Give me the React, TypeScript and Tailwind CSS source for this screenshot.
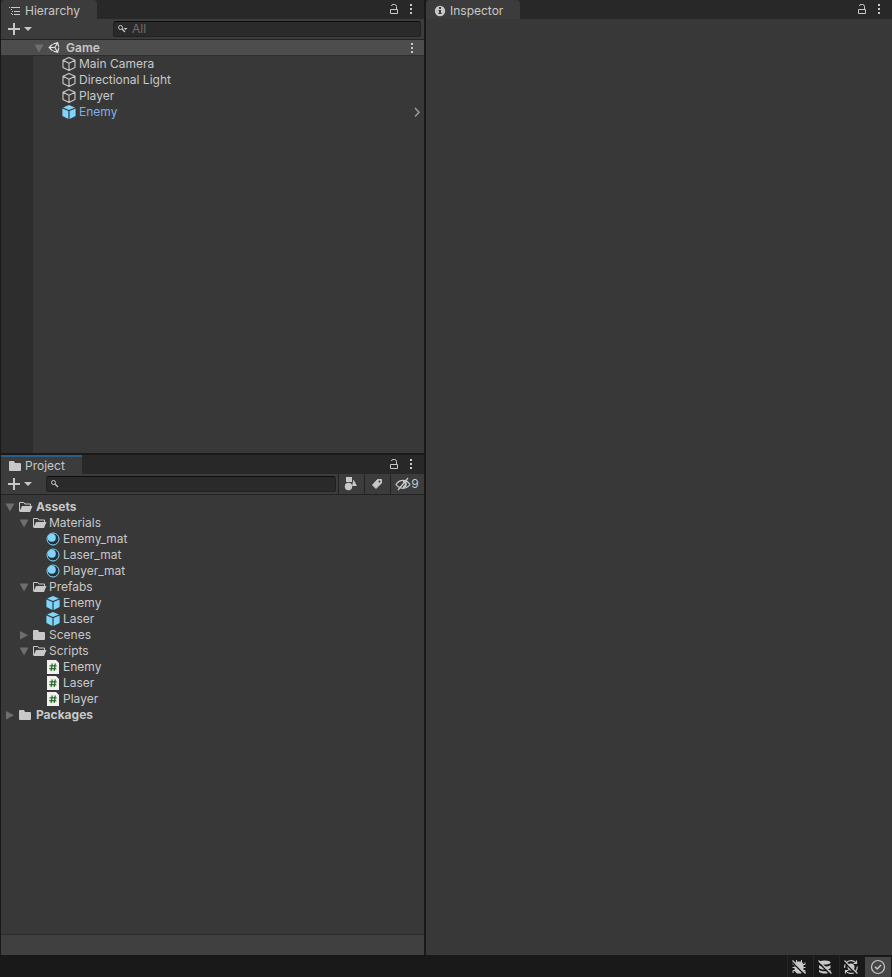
import { useState } from 'react';
import type { ReactNode } from 'react';
import { FaUnity } from 'react-icons/fa';

type IconProps = { className?: string };

function HierarchyIcon() {
  return (
    <svg className="h-4 w-3 shrink-0" viewBox="0 0 12 16" fill="currentColor">
      <path d="M0 4h1v1H0zM2 4h9v1H2zM2 6h1v1H2zM3 8h1v1H3zM5 8h6v1H5zM2 10h1v1H2zM3 11h1v1H3zM5 11h6v1H5z" />
    </svg>
  );
}

function InfoIcon() {
  return (
    <svg className="h-4 w-3 shrink-0" viewBox="0 0 12 16">
      <circle cx="6" cy="8" r="5.200" fill="currentColor" />
      <path d="M5 4h2v2H5zM4.500 7H7v3h.7v1H4.400v-1H5V8h-.5z" fill="#3c3c3c" />
    </svg>
  );
}

function LockIcon() {
  return (
    <svg className="h-3 w-2.5" viewBox="0 0 10 12" fill="none" stroke="currentColor">
      <path d="M1.500 6.500h7v4h-7zM2.500 3q0-1.500 1.500-1.500h1.500q2 0 2 2V6" />
    </svg>
  );
}

function KebabIcon() {
  return (
    <svg className="h-3 w-1" viewBox="0 0 4 12" fill="currentColor">
      <path d="M1 1h2v2H1zM1 5h2v2H1zM1 9h2v2H1z" />
    </svg>
  );
}

function PlusIcon() {
  return (
    <svg className="h-3 w-6" viewBox="0 0 24 12" fill="currentColor">
      <path d="M5 0h2v5h5v2H7v5H5V7H0V5h5zM16 4h8l-4 4z" />
    </svg>
  );
}

function SearchIcon({ menu = false }: { menu?: boolean }) {
  return (
    <svg className="h-3 w-3 shrink-0" viewBox="0 0 12 12" fill="none" stroke="currentColor">
      <circle cx="3.500" cy="4.500" r="2" />
      <path d="M5 6 8 9" strokeWidth="1.300" />
      {menu && <path d="M6.500 5h4l-2 2z" fill="currentColor" stroke="none" />}
    </svg>
  );
}

function Foldout({ open }: { open: boolean }) {
  return (
    <svg className="size-3 shrink-0 text-[#6e6e6e]" viewBox="0 0 12 12" fill="currentColor">
      {open ? <path d="M1.500 2.500h9L6 10.500z" /> : <path d="M2 2v8.500l8-4.200z" />}
    </svg>
  );
}

function ObjectIcon() {
  return (
    <svg className="size-4 shrink-0" viewBox="0 0 16 16" fill="none" stroke="currentColor" strokeWidth="1.100" strokeLinejoin="round">
      <path d="M8 1.500 14 4.300v7.200L8 14.500 2 11.500V4.300zM2 4.300l6 3 6-3M8 7.300v7.200" />
    </svg>
  );
}

function PrefabIcon() {
  return (
    <svg className="size-4 shrink-0" viewBox="0 0 16 16" fill="#7fd6fd">
      <path d="M8 1l6 2.400-6 2.500-6-2.500zM1.400 4.400l6 2.500V15l-6-3zM14.600 4.400l-6 2.500V15l6-3z" />
    </svg>
  );
}

function MaterialIcon() {
  return (
    <svg className="size-4 shrink-0" viewBox="0 0 16 16">
      <circle cx="8" cy="8" r="6" fill="#263238" stroke="#7fd6fd" />
      <circle cx="6.800" cy="6.800" r="4" fill="#7fd6fd" />
    </svg>
  );
}

function ScriptIcon() {
  return (
    <svg className="size-4 shrink-0" viewBox="0 0 16 16">
      <path d="M2 1h9l3 3v11H2z" fill="#f0f0f0" />
      <path d="M7.200 4.500 6.200 12M10.200 4.500 9.200 12M4.600 6.800h7M4.300 9.700h7" fill="none" stroke="#2c6a2c" strokeWidth="1.300" />
    </svg>
  );
}

function FolderIcon({ className = 'size-4' }: IconProps) {
  return (
    <svg className={`shrink-0 ${className}`} viewBox="0 0 16 16" fill="currentColor">
      <path d="M2 4q0-1 1-1h4l1 2h5q1 0 1 1v6q0 1-1 1H3q-1 0-1-1z" />
    </svg>
  );
}

function OpenFolderIcon() {
  return (
    <svg className="size-4 shrink-0" viewBox="0 0 16 16">
      <path d="M2.500 12V3.500h4.300l1 1.500h5.700v2" fill="none" stroke="currentColor" />
      <path d="M5 7h10.500L13 13H2.300z" fill="currentColor" />
    </svg>
  );
}

function FilterTypeIcon() {
  return (
    <svg className="size-4" viewBox="0 0 16 16" fill="currentColor">
      <path d="M3 1h6v5H3zM10.500 3.500 14 10H9z" />
      <circle cx="5.500" cy="10.500" r="3.700" />
    </svg>
  );
}

function LabelIcon() {
  return (
    <svg className="size-4" viewBox="0 0 16 16">
      <path d="M8.500 3.500h4v3.500L7 12.500 3.500 9z" fill="currentColor" stroke="currentColor" strokeLinejoin="round" />
      <circle cx="10.500" cy="5.500" r="1" fill="#3c3c3c" />
    </svg>
  );
}

function HiddenIcon() {
  return (
    <svg className="h-4 w-4" viewBox="0 0 16 16" fill="none" stroke="currentColor" strokeWidth="1.300">
      <path d="M1 8.500C4.500 3 11.500 3 15 8.500c-3.500 5-10.500 5-14 0zM3 14 13 2" />
      <path d="M8 5.500a2.800 2.800 0 0 1 0 5.600" strokeWidth="2" />
    </svg>
  );
}

function BugOffIcon() {
  return (
    <svg className="size-4" viewBox="0 0 16 16">
      <path d="M5.500 3.500V1M10.500 3.500V1M4 5.500H2V3.500M12 5.500h2V3.500M4 8.500H1.500M12 8.500h2.500M4 11.500H2V14M12 11.500h2V14" fill="none" stroke="currentColor" />
      <path d="M5.500 2.500h5L12.500 5v7L10 14.500H6L3.500 12V5z" fill="currentColor" />
      <path d="M1.500 3.500 13 15" stroke="#191919" strokeWidth="1.500" />
      <path d="M1.500 1.500 14.500 14.500" stroke="currentColor" strokeWidth="1.200" />
    </svg>
  );
}

function CacheOffIcon() {
  return (
    <svg className="size-4" viewBox="0 0 16 16">
      <path d="M2 3.500C2 .8 13.500 .8 13.500 3.500S2 6.200 2 3.500zM2 6c2 2 9.500 2 11.500 0v3c-2 2-9.500 2-11.500 0zM2 10.700c2 2 9.500 2 11.500 0v2c-2 2.400-9.500 2.400-11.500 0z" fill="currentColor" />
      <path d="M1.500 3.500 13 15" stroke="#191919" strokeWidth="1.500" />
      <path d="M1.500 1.500 14.500 14.500" stroke="currentColor" strokeWidth="1.200" />
    </svg>
  );
}

function LightingOffIcon() {
  return (
    <svg className="size-4" viewBox="0 0 16 16" fill="none" stroke="currentColor" strokeWidth="1.200">
      <path d="M4 3A6.400 6.400 0 0 1 13 4M14.300 7.500a6.400 6.400 0 0 1-1.500 4.500M11.500 13.400A6.400 6.400 0 0 1 3 12M1.700 9A6.400 6.400 0 0 1 2.500 4.800M13.500 1.500v3h-3M2.500 14.500v-3h3" />
      <circle cx="8" cy="8" r="3.500" fill="currentColor" stroke="none" />
      <path d="M1.500 3.500 13 15" stroke="#191919" strokeWidth="1.500" />
      <path d="M1.500 1.500 14.500 14.500" />
    </svg>
  );
}

function ProgressIcon() {
  return (
    <svg className="size-4" viewBox="0 0 16 16" fill="none" stroke="currentColor" strokeWidth="1.200">
      <circle cx="8" cy="8" r="6.500" />
      <path d="m5 7.800 2.200 2.200L11 6" strokeWidth="1.500" />
    </svg>
  );
}

function TabBar({ icon, title, active = false }: { icon: ReactNode; title: string; active?: boolean }) {
  return (
    <div className="flex h-[19px] shrink-0 items-stretch bg-[#282828]">
      <button
        type="button"
        className={`flex items-center gap-1 bg-[#3c3c3c] pr-[17px] pl-2 ${
          active ? 'border-t-2 border-[#2c5d87]' : 'rounded-t-sm pt-0.5'
        }`}
      >
        {icon}
        <span>{title}</span>
      </button>
      <div className="ml-auto flex items-center gap-2.5 pr-[11px] pb-px">
        <button type="button" aria-label={`Lock ${title}`}>
          <LockIcon />
        </button>
        <button type="button" aria-label={`${title} menu`}>
          <KebabIcon />
        </button>
      </div>
    </div>
  );
}

const hierarchy = [
  { name: 'Main Camera', prefab: false },
  { name: 'Directional Light', prefab: false },
  { name: 'Player', prefab: false },
  { name: 'Enemy', prefab: true },
];

const assets = [
  { name: 'Assets', depth: 0, kind: 'open' },
  { name: 'Materials', depth: 1, kind: 'open' },
  { name: 'Enemy_mat', depth: 2, kind: 'material' },
  { name: 'Laser_mat', depth: 2, kind: 'material' },
  { name: 'Player_mat', depth: 2, kind: 'material' },
  { name: 'Prefabs', depth: 1, kind: 'open' },
  { name: 'Enemy', depth: 2, kind: 'prefab' },
  { name: 'Laser', depth: 2, kind: 'prefab' },
  { name: 'Scenes', depth: 1, kind: 'closed' },
  { name: 'Scripts', depth: 1, kind: 'open' },
  { name: 'Enemy', depth: 2, kind: 'script' },
  { name: 'Laser', depth: 2, kind: 'script' },
  { name: 'Player', depth: 2, kind: 'script' },
  { name: 'Packages', depth: 0, kind: 'closed' },
];

const indents = ['pl-[3px]', 'pl-[17px]', 'pl-[44px]'];

const kindIcons: Record<string, ReactNode> = {
  open: <OpenFolderIcon />,
  closed: <FolderIcon />,
  material: <MaterialIcon />,
  prefab: <PrefabIcon />,
  script: <ScriptIcon />,
};

const fieldClass =
  'flex h-4 min-w-0 flex-1 items-center gap-[3px] rounded-[3px] border border-[#212121] border-t-[#0d0d0d] bg-[#2a2a2a] px-[3px]';

function HierarchyPanel() {
  const [query, setQuery] = useState('');

  return (
    <section className="flex min-h-0 grow-[453] basis-0 flex-col bg-[#383838]">
      <TabBar icon={<HierarchyIcon />} title="Hierarchy" />
      <div className="flex h-[21px] shrink-0 items-center border-b border-[#232323] bg-[#3c3c3c] pr-[3px] pl-[7px]">
        <button type="button" aria-label="Create object" className="mr-[81px]">
          <PlusIcon />
        </button>
        <label className={fieldClass}>
          <SearchIcon menu />
          <input
            type="text"
            aria-label="Search hierarchy"
            placeholder="All"
            value={query}
            onChange={(e) => setQuery(e.target.value)}
            className="h-3.5 w-full min-w-0 bg-transparent outline-none placeholder:text-[#6e6e6e]"
          />
        </label>
      </div>
      <div className="flex h-4 shrink-0 items-center border-b border-[#2d2d2d] bg-[#4d4d4d] pr-2.5 pl-8">
        <button type="button" className="flex items-center font-semibold">
          <Foldout open />
          <FaUnity className="ml-[3px] size-[13px] text-[#e4e4e4]" />
          <span className="pl-[5px]">Game</span>
        </button>
        <button type="button" aria-label="Scene menu" className="ml-auto">
          <KebabIcon />
        </button>
      </div>
      <div className="flex flex-1">
        <div className="w-8 bg-[#2d2d2d]" />
        <ul className="flex-1">
          {hierarchy.map((item) => (
            <li key={item.name} className="flex h-4 items-center pr-[3px] pl-7">
              <button
                type="button"
                className={`flex items-center gap-0.5 ${item.prefab ? 'text-[#7faee8]' : ''}`}
              >
                {item.prefab ? <PrefabIcon /> : <ObjectIcon />}
                <span>{item.name}</span>
              </button>
              {item.prefab && (
                <button type="button" aria-label="Open prefab" className="ml-auto text-[#9a9a9a]">
                  <svg className="h-3 w-2" viewBox="0 0 8 12" fill="none" stroke="currentColor" strokeWidth="1.500">
                    <path d="M2 2l4 4.200-4 4.200" />
                  </svg>
                </button>
              )}
            </li>
          ))}
        </ul>
      </div>
    </section>
  );
}

function ProjectPanel() {
  const [query, setQuery] = useState('');

  return (
    <section className="flex min-h-0 grow-[500] basis-0 flex-col bg-[#383838]">
      <TabBar icon={<FolderIcon className="-mx-0.5 size-4" />} title="Project" active />
      <div className="flex h-[21px] shrink-0 items-center border-b border-[#232323] bg-[#3c3c3c] pl-[7px]">
        <button type="button" aria-label="Create asset" className="mr-3.5">
          <PlusIcon />
        </button>
        <label className={fieldClass}>
          <SearchIcon />
          <input
            type="text"
            aria-label="Search project"
            value={query}
            onChange={(e) => setQuery(e.target.value)}
            className="h-3.5 w-full min-w-0 bg-transparent outline-none"
          />
        </label>
        <div className="ml-0.5 flex self-stretch">
          <button type="button" aria-label="Search by type" className="flex w-[26px] items-center justify-center border-l border-[#232323] pr-0.5">
            <FilterTypeIcon />
          </button>
          <button type="button" aria-label="Search by label" className="flex w-[26px] items-center justify-center border-l border-[#232323] pr-0.5">
            <LabelIcon />
          </button>
          <button type="button" aria-label="Hidden packages" className="flex w-[34px] items-center justify-center border-l border-[#232323] pr-px">
            <HiddenIcon />
            <span>9</span>
          </button>
        </div>
      </div>
      <ul className="min-h-0 flex-1 overflow-hidden pt-1">
        {assets.map((item, index) => (
          <li key={index} className={`flex h-4 items-center ${indents[item.depth]}`}>
            <button type="button" className={`flex items-center ${item.depth === 0 ? 'font-bold' : ''}`}>
              {item.depth < 2 && (
                <span className="pr-px">
                  <Foldout open={item.kind === 'open'} />
                </span>
              )}
              {kindIcons[item.kind]}
              <span className={item.depth === 0 ? 'pl-[3px]' : 'pl-0.5'}>{item.name}</span>
            </button>
          </li>
        ))}
      </ul>
      <div className="h-[21px] shrink-0 border-t border-[#2a2a2a] bg-[#404040]" />
    </section>
  );
}

const statusButtons = [
  { label: 'Debugger disabled', icon: <BugOffIcon /> },
  { label: 'Cache server disconnected', icon: <CacheOffIcon /> },
  { label: 'Auto generate lighting off', icon: <LightingOffIcon /> },
];

export default function App() {
  return (
    <div className="flex h-screen flex-col bg-[#191919] font-[Inter,sans-serif] text-[12px] leading-4 text-[#c8c8c8]">
      <main className="grid min-h-0 flex-1 grid-cols-[423fr_466fr] gap-0.5 pl-px">
        <div className="flex min-h-0 min-w-0 flex-col gap-0.5">
          <HierarchyPanel />
          <ProjectPanel />
        </div>
        <section className="flex min-w-0 flex-col bg-[#383838]">
          <TabBar icon={<InfoIcon />} title="Inspector" />
        </section>
      </main>
      <footer className="flex h-[22px] shrink-0 justify-end pr-px">
        {statusButtons.map((item) => (
          <button
            key={item.label}
            type="button"
            aria-label={item.label}
            className="flex w-[26px] items-center justify-center border-l border-[#262626] pt-0.5 pr-[3px]"
          >
            {item.icon}
          </button>
        ))}
        <button type="button" aria-label="Background tasks" className="mt-0.5 flex w-[26px] items-center justify-center bg-[#464646]">
          <ProgressIcon />
        </button>
      </footer>
    </div>
  );
}
